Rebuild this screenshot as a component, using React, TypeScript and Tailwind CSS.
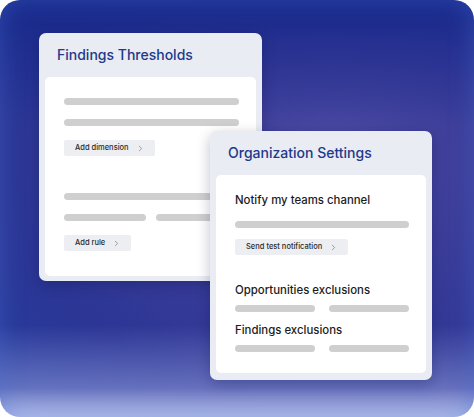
import React from 'react';
import { ChevronRight } from 'lucide-react';

const font = { fontFamily: '"Inter", "Noto Sans", sans-serif' };

const Bar = ({ className = '' }: { className?: string }) => (
  <div className={`h-[7px] rounded-full bg-[#cfcfcf] ${className}`} />
);

const Pill = ({ label }: { label: string }) => (
  <div className="flex h-[16px] w-fit items-center gap-[7px] rounded-[2px] bg-[#eceef2] pl-[11px] pr-[10px]">
    <span className="text-[7.5px] font-medium leading-none text-[#2b2b2b]">{label}</span>
    <ChevronRight size={9} strokeWidth={1.6} className="text-[#666]" />
  </div>
);

const Card = ({ title, children, className = '' }: { title: string; children: React.ReactNode; className?: string }) => (
  <div className={`flex flex-col rounded-[7px] bg-[#e9ecf2] shadow-[0_4px_14px_rgba(5,10,60,0.25)] ${className}`}>
    <div className="flex h-[44px] items-center pl-[18px]">
      <h2 className="text-[14px] font-medium leading-[20px] text-[#22398a]">{title}</h2>
    </div>
    <div className="mx-[6px] flex-1 rounded-[5px] bg-white pl-[19px] pr-[17px]">{children}</div>
  </div>
);

const Label = ({ text, className = '' }: { text: string; className?: string }) => (
  <p className={`text-[11.4px] font-medium leading-[14px] text-[#1c1c1c] ${className}`}>{text}</p>
);

export default function App() {
  return (
    <div
      style={font}
      className="relative h-[417px] w-[474px] overflow-hidden rounded-[20px] bg-[linear-gradient(to_top,rgba(196,204,240,0.95)_0%,rgba(140,150,215,0.6)_7%,rgba(70,80,175,0)_22%),linear-gradient(to_bottom,#17288a_0%,rgba(23,40,138,0.6)_10%,rgba(23,40,138,0)_30%),radial-gradient(ellipse_at_70%_38%,#4a4aa2_0%,#3c3d99_32%,#2c3695_68%,#243d9f_100%)] shadow-[inset_0_0_24px_rgba(70,110,210,0.45)]"
    >
      <div className="pl-[39px] pt-[33px]">
        <Card title="Findings Thresholds" className="h-[248px] w-[223px] pb-[5px]">
          <Bar className="mt-[21px]" />
          <Bar className="mt-[14px]" />
          <div className="mt-[14px]">
            <Pill label="Add dimension" />
          </div>
          <Bar className="mt-[37px]" />
          <div className="mt-[14px] flex gap-[10px]">
            <Bar className="w-[82px]" />
            <Bar className="flex-1" />
          </div>
          <div className="mt-[14px]">
            <Pill label="Add rule" />
          </div>
        </Card>
      </div>

      <Card title="Organization Settings" className="absolute left-[210px] top-[131px] h-[249px] w-[222px] pb-[7px]">
        <Label text="Notify my teams channel" className="mt-[18px]" />
        <Bar className="mt-[14px]" />
        <div className="mt-[11px]">
          <Pill label="Send test notification" />
        </div>
        <Label text="Opportunities exclusions" className="mt-[28px]" />
        <div className="mt-[8px] flex gap-[14px]">
          <Bar className="flex-1" />
          <Bar className="flex-1" />
        </div>
        <Label text="Findings exclusions" className="mt-[11px]" />
        <div className="mt-[8px] flex gap-[14px]">
          <Bar className="flex-1" />
          <Bar className="flex-1" />
        </div>
      </Card>
    </div>
  );
}
